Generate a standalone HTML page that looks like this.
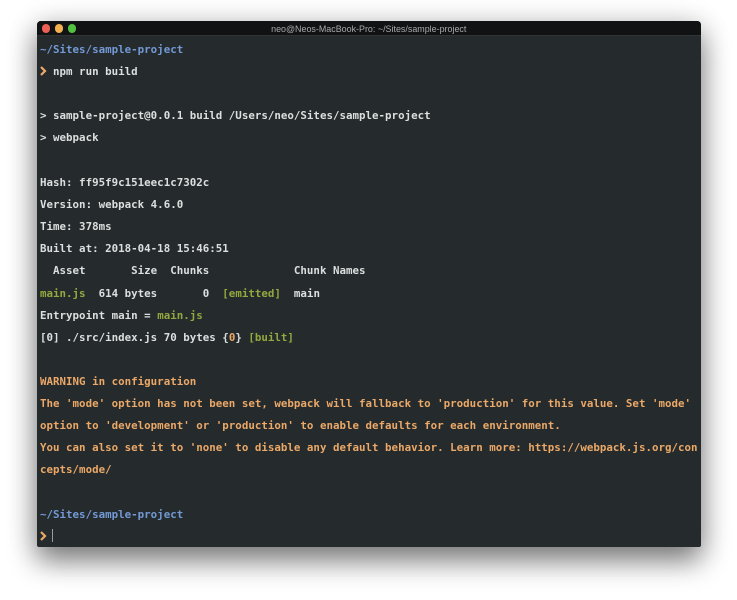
<!DOCTYPE html>
<html>
<head>
<meta charset="utf-8">
<style>
html,body{margin:0;padding:0;background:#fff;width:737px;height:600px;overflow:hidden}
#win{position:absolute;left:37px;top:21px;width:663.5px;height:526px;background:#252b2c;border-radius:4px 4px 2px 2px;box-shadow:0 14px 28px rgba(0,0,0,.48),0 2px 30px rgba(0,0,0,.16)}
#bar{position:absolute;left:0;top:0;right:0;height:14px;background:#101213;border-radius:4px 4px 0 0;border-bottom:1px solid #333}
.d{position:absolute;top:3px;width:8.5px;height:8.5px;border-radius:50%}
#title{position:absolute;left:0;right:0;top:1px;text-align:center;font:8.93px/14px "Liberation Sans",sans-serif;color:#a9abab;padding-left:0}
#t{position:absolute;left:0;top:0;width:737px;height:600px;filter:blur(.3px)}
.l{position:absolute;left:40px;font:bold 10.8px/16px "DejaVu Sans Mono",monospace;letter-spacing:.01px;color:#dcdfdf;white-space:pre}
.b{color:#7399d6}.o{color:#eba868}.g{color:#93a83f}
#cur{position:absolute;left:52px;top:529px;width:1px;height:13px;background:#9a9a9a}
svg{position:absolute;left:40px;width:7px;height:10px}
</style>
</head>
<body>
<div id="win">
<div id="bar"><span class="d" style="left:4.5px;background:#ee5f55"></span><span class="d" style="left:17.5px;background:#f2b04f"></span><span class="d" style="left:30.5px;background:#52c040"></span><div id="title">neo@Neos-MacBook-Pro: ~/Sites/sample-project</div></div>
</div>
<div id="t">
<div class="l b" style="top:42px">~/Sites/sample-project</div>
<svg style="top:66px" viewBox="0 0 7 10"><polyline points="1,1 5,5 1,9" fill="none" stroke="#eba868" stroke-width="2.2"/></svg>
<div class="l" style="top:64px">  npm run build</div>
<div class="l" style="top:108px">&gt; sample-project@0.0.1 build /Users/neo/Sites/sample-project</div>
<div class="l" style="top:130px">&gt; webpack</div>
<div class="l" style="top:175px">Hash: ff95f9c151eec1c7302c</div>
<div class="l" style="top:197px">Version: webpack 4.6.0</div>
<div class="l" style="top:219px">Time: 378ms</div>
<div class="l" style="top:241px">Built at: 2018-04-18 15:46:51</div>
<div class="l" style="top:263px">  Asset       Size  Chunks             Chunk Names</div>
<div class="l" style="top:286px"><span class="g">main.js</span>  614 bytes       0  <span class="g">[emitted]</span>  main</div>
<div class="l" style="top:308px">Entrypoint main = <span class="g">main.js</span></div>
<div class="l" style="top:330px">[0] ./src/index.js 70 bytes {<span class="o">0</span>} <span class="g">[built]</span></div>
<div class="l o" style="top:374px">WARNING in configuration</div>
<div class="l o" style="top:396px">The 'mode' option has not been set, webpack will fallback to 'production' for this value. Set 'mode'</div>
<div class="l o" style="top:418px">option to 'development' or 'production' to enable defaults for each environment.</div>
<div class="l o" style="top:440px">You can also set it to 'none' to disable any default behavior. Learn more: https://webpack.js.org/con</div>
<div class="l o" style="top:462px">cepts/mode/</div>
<div class="l b" style="top:507px">~/Sites/sample-project</div>
<svg style="top:531px" viewBox="0 0 7 10"><polyline points="1,1 5,5 1,9" fill="none" stroke="#eba868" stroke-width="2.2"/></svg>
<div id="cur"></div>
</div>
</body>
</html>
